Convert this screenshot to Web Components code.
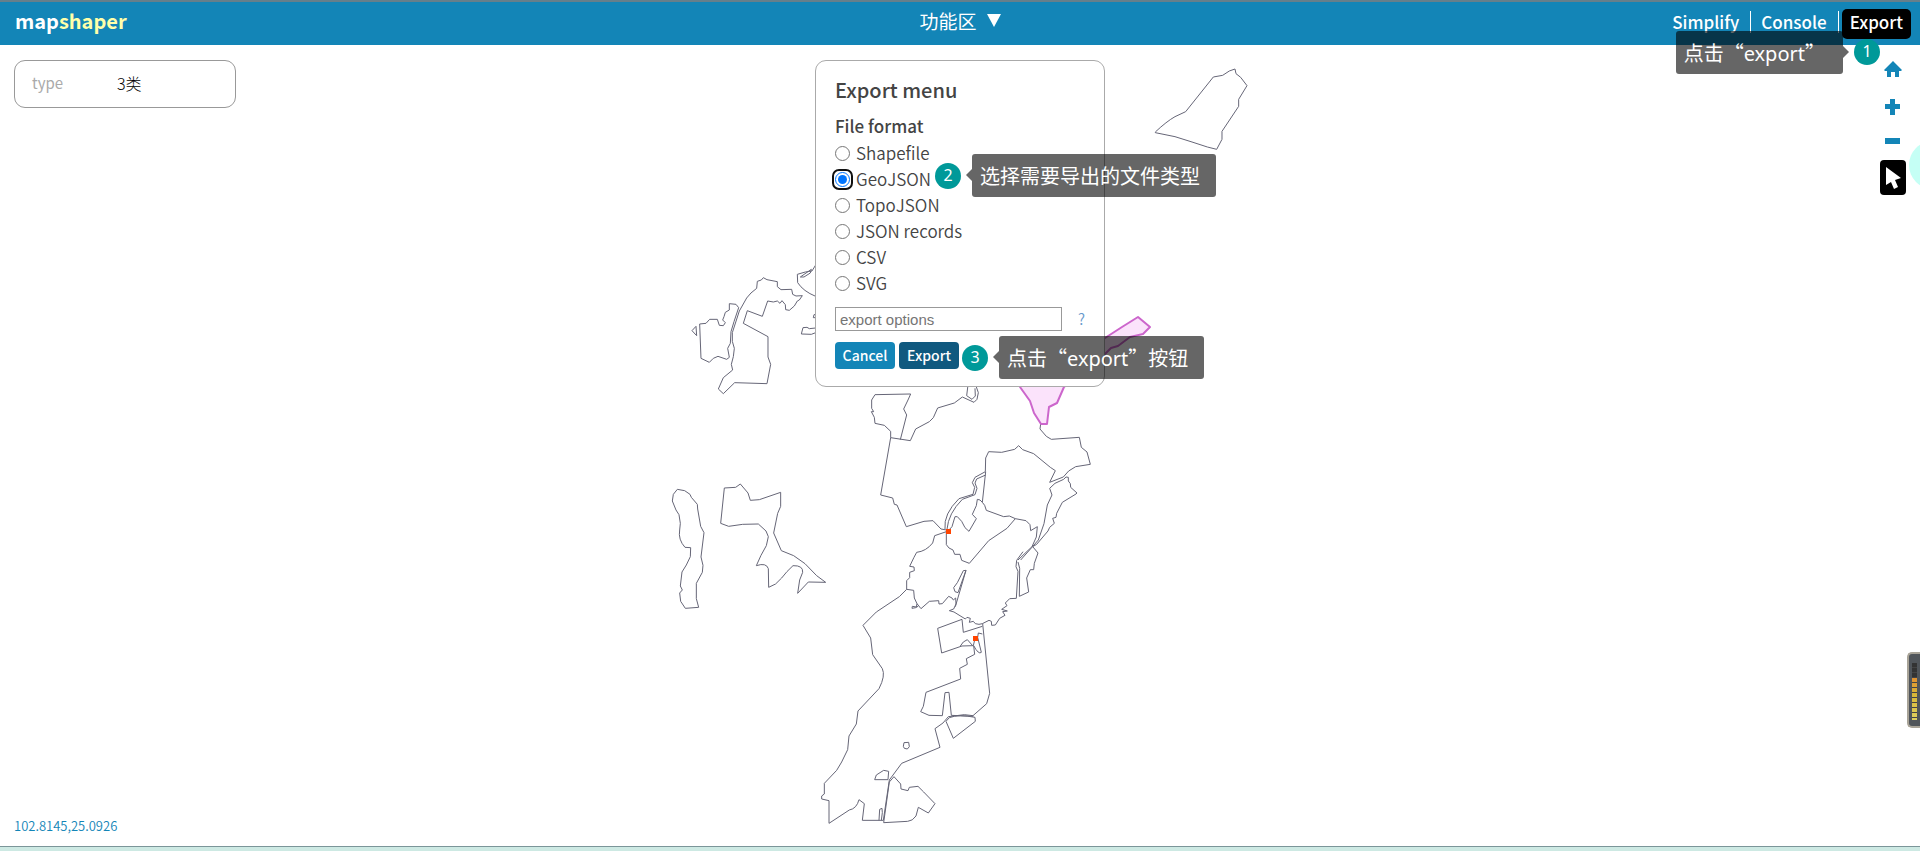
<!DOCTYPE html>
<html lang="zh-CN">
<head>
<meta charset="utf-8">
<title>mapshaper</title>
<style>
  html, body { margin: 0; height: 100%; }
  body {
    font-family: "Noto Sans CJK SC", sans-serif;
    --blue: #1385b7;
    --navy: #10597f;
    --ink: #444;
    overflow: hidden;
  }
</style>
</head>
<body>
<mapshaper-app></mapshaper-app>
<script>
  function define(name, html) {
    const template = document.createElement('template');
    template.innerHTML = html;
    customElements.define(name, class extends HTMLElement {
      constructor() {
        super();
        this.attachShadow({ mode: 'open' }).append(template.content.cloneNode(true));
      }
    });
  }

  /* Numbered step marker with its explanatory bubble */
  define('step-note', `
    <style>
      :host { display: flex; align-items: center; gap: 11px; width: max-content; font-size: 20px; color: #fff; }
      :host([side="left"]) { flex-direction: row-reverse; }
      .num { display: block; width: 26px; height: 26px; border-radius: 50%; background: #009999;
             font: 16px/24px "Noto Sans", sans-serif; text-align: center; }
      .bubble { position: relative; box-sizing: border-box; height: 43px; padding: 0 16px 0 8px; line-height: 44px;
                border-radius: 3px; background: rgba(0, 0, 0, .6); white-space: nowrap; }
      .bubble::before { content: ""; position: absolute; top: 15px; right: 100%;
                border: 6px solid transparent; border-left: 0; border-right-color: rgba(0, 0, 0, .6); }
      :host([side="left"]) .bubble { padding-right: 18px; }
      :host([side="left"]) .bubble::before { right: auto; left: 100%;
                border: 6px solid transparent; border-right: 0; border-left-color: rgba(0, 0, 0, .6); }
      ::slotted(span) { font-family: "Noto Sans", sans-serif; }
    </style>
    <span class="num"><slot name="num"></slot></span><span class="bubble"><slot></slot></span>`);

  define('app-header', `
    <style>
      :host { display: grid; grid-template-columns: 1fr auto 1fr; align-items: center; box-sizing: border-box; height: 45px;
              border-top: 2px solid #667f8b; background: var(--blue); color: #fff; }
      button { border: 0; background: none; color: inherit; font: 500 17px/26px "Noto Sans CJK SC", sans-serif; padding: 0 0 4px; }
      .logo { justify-self: start; margin-left: 15px; padding-bottom: 5px; font-size: 20px; font-weight: 700; line-height: 36px;
              color: #fff; text-decoration: none; }
      .logo span { color: #ffa; }
      .area { display: flex; align-items: center; gap: 10px; padding-bottom: 6px; font-size: 19px; font-weight: 400; }
      nav { position: relative; justify-self: end; display: flex; align-items: center; height: 30px; margin-right: 9px; }
      nav > button { padding: 0 11px 4px 10px; }
      .sep { width: 1px; height: 22px; background: #fff; margin-bottom: 4px; }
      nav > .on { margin-left: 3px; padding: 0 8px 4px; border-radius: 5px; background: #000; }
      step-note { position: absolute; z-index: 2; right: 31px; top: 22px; }
    </style>
    <a class="logo" href="#">map<span>shaper</span></a>
    <button class="area">功能区 <svg width="14" height="13" aria-hidden="true"><path d="M0 0H14L7 13Z" fill="#fff"/></svg></button>
    <nav>
      <button>Simplify</button><i class="sep"></i>
      <button>Console</button><i class="sep"></i>
      <button class="on">Export</button>
      <step-note side="left"><span slot="num">1</span>点击“<span>export</span>”</step-note>
    </nav>`);

  define('map-canvas', `
    <style>
      :host { display: block; position: absolute; inset: 0; }
      svg { display: block; width: 100%; height: 100%; }
      path { fill: none; stroke: #667; stroke-width: 1; vector-effect: non-scaling-stroke; stroke-linejoin: round; }
      .hit { fill: #fbe3fb; stroke: #cc66cc; stroke-width: 2; }
      rect { fill: #f40; }
    </style>
    <svg viewBox="0 45 1920 801" role="img" aria-label="map">
      <g transform="translate(1130 50) scale(.33333)">
        <path d="M76 246Q110 214 135 200L167 185L250 81L278 76L298 63L315 57L318 71L332 82L351 107L326 148V169L276 244V268L260 298L232 291L186 276L135 260L76 248Z"/>
      </g>
      <g transform="translate(660 240) scale(.33333)">
        <path d="M96 272L108 259L110 287Z"/>
        <path d="M119 252L138 250L149 238H172L178 256L190 257L196 248L188 240L192 230L196 217L208 210V191L228 193L236 203L222 245L213 275L211 310L203 325L208 352L200 358L174 349L160 355L148 367L123 355Z"/>
        <path d="M217 278L238 213L260 174L273 159L290 145L292 124L304 120L310 113L321 119L352 125V140L363 149L395 148L398 163L408 168L427 167L418 180L412 183L403 198L388 211L377 209L376 194L366 182L360 190L352 183L340 186L323 183L307 229L262 212L250 250L324 290V351L332 373L321 431L224 428L190 461L175 447L190 413L218 390L214 373L220 350L223 325L217 304Z"/>
        <path d="M467 75L456 93L436 96L412 103L413 128Q430 154 467 169M421 111L454 88L451 99L432 111ZM467 224H462L460 233H467M467 264L448 266L441 262L429 263L424 282L454 283L467 278"/>
      </g>
      <g transform="translate(650 460) scale(.33333)">
        <path d="M82 88L104 92L120 103L124 112L142 133L143 147L152 199L162 218L153 291L159 316L157 337L139 370V416L146 442L106 445L92 424L89 399L97 390L91 378L96 336L109 315L121 290L122 263L105 262Q84 239 89 210L91 190L87 164L78 150L67 123L70 103Z"/>
        <path d="M223 84L257 82L271 72L294 99L301 121L328 119L392 97V139L383 160L371 219L394 272L431 287L465 311L500 347L527 367L475 366L443 400L449 360L458 337Q460 316 429 317Q410 334 395 354Q378 376 356 382L355 326Q349 307 319 317L333 286L349 257L355 230L348 213L325 192L278 193L236 199L212 190Z"/>
      </g>
      <g transform="translate(840 370) scale(.33333)">
        <path d="M105 74L212 72L204 90L191 117L200 135L181 209M105 74L95 90V115L101 125L94 125L103 142L105 160L133 166L152 184V203L211 212L227 177L268 155L280 143L293 114L343 99L367 81L402 97L411 88L415 68L407 45M384 45L380 77L396 88L406 78L405 55M152 203L122 375L158 384L163 403L171 405L199 470L252 454L279 452L303 477L325 481"/>
        <path d="M602 162L600 177L619 199L634 208L718 202L724 232L741 246L751 283L707 290L686 303L670 321L629 337L646 302L631 292L581 251L548 239L536 227L524 238L485 247L446 245L437 264L436 305L405 322L397 338L404 352L399 373L357 386Q310 432 315 477M437 315L410 327L405 339L411 355L405 374L367 388Q325 430 321 478"/>
        <path d="M437 305L427 397L420 390L412 388L409 407L397 433L409 446L387 484L375 473L365 454L352 440L345 440L336 470L325 482M427 397L434 406L439 421L491 440L508 438L526 446L558 452L570 464L572 482L592 470L589 501L576 530L534 570M526 446L501 475L446 512L388 580"/>
        <path d="M629 355L645 340L671 328L678 321L685 322V333L691 341L692 352L711 369L708 372L667 397L650 430L648 442L638 445L643 460L629 472L624 483L590 523L578 530M629 355L636 375L622 405L612 461L595 510L575 533L542 570"/>
      </g>
      <g transform="translate(840 530) scale(.33333)">
        <path d="M322 4L284 17L278 39Q258 64 230 67L222 82L209 109L222 111L223 122L209 127V143L200 152V178L221 181L223 204L231 221L243 236L268 214L296 212L297 222L307 221L326 199L336 204L340 210L347 204L348 222L341 237L328 242L342 246L376 267L381 262L391 265L388 277L400 274L406 281L417 283L427 281L447 271L454 274L455 286L466 285L479 265L495 256L488 245L502 243L485 238L501 227L496 219L509 206L529 205L534 124L528 110L530 91L549 65"/>
        <path d="M319 4V44L327 54L339 60L344 73H360L365 91L388 100M231 221L229 231L217 229L216 235L227 233L234 229M378 121L370 122L352 158L341 173L345 185L354 188ZM378 121L346 230"/>
        <path d="M534 96L539 115L538 199L566 186L560 144L571 119H581L583 100L594 69L579 51"/>
        <path d="M200 178L178 200L109 246L69 286L92 324L98 374L127 416Q137 437 117 476L54 543L49 582L27 618L23 659L5 696L-10 721L-47 760V792L-55 798V807L-33 812V880L28 840Q50 836 57 809L73 821L67 871H130L148 750L185 700L300 652L285 596L309 579L325 560L373 554L399 557L440 521L449 490L428 281"/>
        <path d="M427 289L370 307L366 268L293 295L305 369L366 348L400 347L404 330M361 348L370 336L382 329L398 347M427 312L415 309L413 322L424 367Q416 375 401 347L404 373L379 386L382 403L359 415L362 447L258 487L250 529L242 545L267 556L307 557L315 488L327 487L334 556L400 559"/>
        <path d="M318 574L328 563Q356 552 405 562L406 574L340 625ZM192 638L206 637L208 650L202 657L193 655L190 649ZM104 749L109 735L131 721L146 724L144 749ZM117 871L119 838L126 835L127 848L124 871"/>
        <path d="M148 756L162 740L182 762L183 777L204 782L208 772L234 769L251 786L285 821L265 849L235 832L228 858Q218 873 203 874L131 878Z"/>
      </g>
      <path class="hit" d="M1105 338L1122 327L1138 317L1150 327L1143 334L1130 337L1118 346L1111 348L1105 354L1094 366L1064 387L1057 403L1049 407L1047 424L1041 424L1034 413L1030 401L1020 387L1035 360Z"/>
      <rect x="946" y="529" width="5" height="5"/><rect x="973" y="636" width="5" height="5"/>
    </svg>`);

  define('feature-info', `
    <style>
      :host { display: block; width: max-content; position: relative; }
      table { box-sizing: border-box; width: 222px; height: 48px; border: 1px solid #999; border-radius: 11px; background: #fff;
              border-collapse: separate; border-spacing: 0; padding: 0 17px; font-size: 15px; line-height: 24px; table-layout: fixed; }
      th, td { padding: 0 0 3px; text-align: left; font-weight: 400; }
      th { width: 85px; color: #aaa; }
      td { color: #000; font-size: 16px; font-weight: 300; }
    </style>
    <table><tr><th scope="row">type</th><td>3类</td></tr></table>`);

  define('map-tools', `
    <style>
      :host { display: flex; flex-direction: column; align-items: center; width: 26px; }
      button { display: grid; place-items: center; width: 26px; height: 34px; padding: 0; border: 0; background: none; color: var(--blue); }
      .plus { height: 42px; }
      .minus { height: 26px; margin-bottom: 6px; }
      .on { height: 35px; border-radius: 4px; background: #000; }
      svg { fill: currentColor; }
      .on svg { fill: #fff; }
    </style>
    <button aria-label="home"><svg width="18" height="18"><path d="M9 1L18 10L17 11H15V17H11V12H7V17H3V11H1L0 10Z"/></svg></button>
    <button class="plus" aria-label="zoom in"><svg width="16" height="16"><path d="M5 0H10V5H15V10H10V16H5V10H0V5H5Z"/></svg></button>
    <button class="minus" aria-label="zoom out"><svg width="16" height="6"><path d="M0 0H15V6H0Z"/></svg></button>
    <button class="on" aria-label="select"><svg width="16" height="22"><path d="M1 0L16 11L10 13L13 20L9 22L6 15L1 18Z"/></svg></button>`);

  define('export-menu', `
    <style>
      :host { display: block; box-sizing: border-box; width: 290px; padding: 15px 19px 17px; border: 1px solid #aaa;
              border-radius: 11px; background: #fff; color: var(--ink); position: relative; }
      h1 { margin: 0 0 9px; font-size: 20px; line-height: 28px; font-weight: 500; }
      fieldset { margin: 0 0 11px; padding: 0; border: 0; min-width: 0; }
      legend { padding: 0 0 1px; font-size: 17px; line-height: 26px; font-weight: 500; }
      .row { position: relative; display: flex; align-items: center; gap: 6px; height: 26px; }
      label { font-size: 17px; line-height: 26px; font-weight: 350; }
      .dot { display: block; width: 15px; height: 15px; border-radius: 4px; }
      .dot input { display: block; width: 15px; height: 15px; margin: 0; }
      .dot:has(:checked) { outline: 2px solid #101010; outline-offset: 1px; }
      .opts { display: flex; align-items: center; margin-bottom: 11px; }
      .opts input { box-sizing: border-box; width: 228px; height: 24px; padding: 1px 4px; border: 1px solid #999;
              font: 15px "Liberation Sans", sans-serif; border-radius: 0; }
      .opts a { margin-left: 16px; font-size: 15px; line-height: 24px; font-weight: 350; color: #69c; text-decoration: none; }
      .acts { position: relative; display: flex; align-items: center; gap: 4px; }
      .acts button { width: 60px; height: 27px; padding: 0 0 1px; border: 0; border-radius: 4px; background: var(--blue); color: #fff;
              font: 500 14px/26px "Noto Sans CJK SC", sans-serif; }
      .acts .go { background: var(--navy); }
      step-note { position: absolute; z-index: 2; }
      .row step-note { left: 100px; top: -12px; }
      .acts step-note { left: 127px; top: -6px; }
    </style>
    <h1>Export menu</h1>
    <fieldset>
      <legend>File format</legend>
      <div class="row"><span class="dot"><input type="radio" name="f" id="shp"></span><label for="shp">Shapefile</label></div>
      <div class="row"><span class="dot"><input type="radio" name="f" id="geo" checked></span><label for="geo">GeoJSON</label>
        <step-note><span slot="num">2</span>选择需要导出的文件类型</step-note></div>
      <div class="row"><span class="dot"><input type="radio" name="f" id="topo"></span><label for="topo">TopoJSON</label></div>
      <div class="row"><span class="dot"><input type="radio" name="f" id="json"></span><label for="json">JSON records</label></div>
      <div class="row"><span class="dot"><input type="radio" name="f" id="csv"></span><label for="csv">CSV</label></div>
      <div class="row"><span class="dot"><input type="radio" name="f" id="svg"></span><label for="svg">SVG</label></div>
    </fieldset>
    <div class="opts"><input type="text" placeholder="export options" aria-label="export options"><a href="#">?</a></div>
    <div class="acts"><button>Cancel</button><button class="go">Export</button>
      <step-note><span slot="num">3</span>点击“<span>export</span>”按钮</step-note></div>`);

  /* Level meter docked at the window's right edge */
  define('level-meter', `
    <style>
      :host { display: block; box-sizing: border-box; width: 13px; height: 76px; border: 2px solid #a8a397; border-right: 0;
              border-radius: 5px 0 0 5px; background: #50555a; padding: 9px 3px; }
      div { width: 5px; height: 57px;
            background: repeating-linear-gradient(transparent 0 4px, #444 4px 5px), linear-gradient(#333 0 14px, #e09030 15px, #d8b838 32px, #e0d060); }
    </style><div></div>`);

  define('mapshaper-app', `
    <style>
      :host { display: flex; flex-direction: column; height: 100vh; background: #fff; }
      app-header { position: relative; z-index: 2; }
      main { position: relative; flex: 1; display: grid; grid-template-columns: 1fr auto 1fr; grid-template-rows: auto 1fr;
             padding: 15px 14px 8px; overflow: hidden; }
      export-menu { z-index: 1; }
      map-tools { justify-self: end; position: relative; margin-top: -8px; }
      output { position: relative; align-self: end; font-size: 13px; line-height: 24px; color: var(--blue); font-weight: 350; }
      .bubble { position: absolute; right: -37px; top: 96px; width: 48px; height: 48px; border-radius: 50%; background: #c5fff5; }
      level-meter { position: absolute; right: 0; top: 607px; }
      footer { height: 4px; border-top: 1px solid #7b9599; background: #cde9e3; }
    </style>
    <app-header></app-header>
    <main>
      <map-canvas></map-canvas>
      <feature-info></feature-info>
      <export-menu></export-menu>
      <map-tools></map-tools>
      <output>102.8145,25.0926</output>
      <i class="bubble"></i>
      <level-meter></level-meter>
    </main>
    <footer></footer>`);
</script>
</body>
</html>
